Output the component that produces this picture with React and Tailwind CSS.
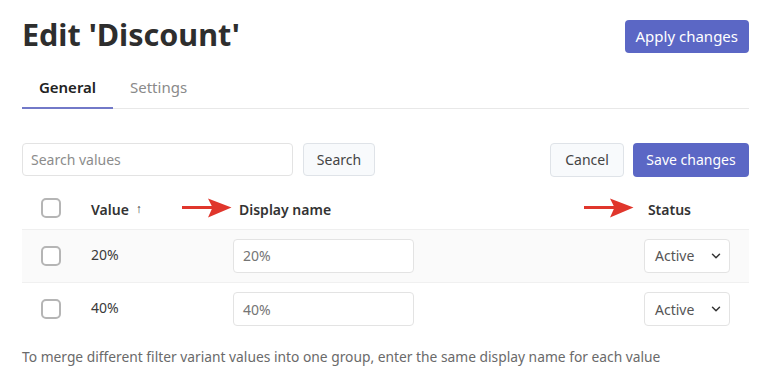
import { ChevronDown } from "lucide-react";

const font = { fontFamily: '"Noto Sans", "Open Sans", sans-serif' };

function RedArrow() {
  return (
    <svg width="50" height="20" viewBox="0 0 50 20" className="shrink-0">
      <path d="M0 9.5 H30" stroke="#e0362c" strokeWidth="3" strokeLinecap="round" />
      <path d="M26 0.5 L49.5 9.5 L26 19.5 L30.5 9.5 Z" fill="#e0362c" />
    </svg>
  );
}

function Checkbox() {
  return <div className="w-[20px] h-[20px] rounded-[5px] border-2 border-[#b5b5b5] bg-white" />;
}

function Row({ value, shaded, last }) {
  return (
    <div className={`flex items-center h-[53px] ${last ? "" : "border-b border-[#f0f0f0]"} ${shaded ? "bg-[#fafafa]" : "bg-white"}`}>
      <div className="w-[69px] pl-[19px]">
        <Checkbox />
      </div>
      <div className="w-[142px] text-[14px] text-[#3a3a3a] -mt-[3px]">{value}</div>
      <div className="w-[181px] h-[34px] border border-[#e3e3e3] rounded-[4px] bg-white flex items-center px-[9px] text-[14px] text-[#757575]">
        {value}
      </div>
      <div className="flex-1" />
      <div className="w-[86px] h-[34px] mr-[19px] border border-[#e3e3e3] rounded-[4px] bg-white flex items-center justify-between pl-[10px] pr-[6px] text-[14px] text-[#555]">
        <span>Active</span>
        <ChevronDown size={14} strokeWidth={2.5} className="text-[#333]" />
      </div>
    </div>
  );
}

export default function App() {
  return (
    <div className="w-[768px] h-[379px] bg-white overflow-hidden px-[22px] pt-[17px]" style={font}>
      <div className="flex items-start justify-between w-[727px]">
        <h1 className="text-[30.5px] leading-[34px] font-bold text-[#2e2e2e]">Edit 'Discount'</h1>
        <button className="mt-[3px] h-[33px] px-[11px] rounded-[4px] bg-[#5b67c5] text-white text-[15px]">
          Apply changes
        </button>
      </div>

      <div className="flex mt-[23px] border-b border-[#e8e8e8] w-[727px]">
        <div className="w-[91px] text-center pb-[8px] border-b-2 border-[#7279c8] -mb-px text-[15px] font-semibold text-[#222]">
          General
        </div>
        <div className="ml-[17px] pb-[8px] text-[15px] text-[#8a8a8a]">Settings</div>
      </div>

      <div className="flex items-center mt-[34px] w-[727px]">
        <div className="w-[271px] h-[33px] border border-[#e3e3e3] rounded-[4px] flex items-center px-[8px] text-[14px] text-[#8c8c8c]">
          Search values
        </div>
        <button className="ml-[10px] w-[72px] h-[33px] border border-[#dfe3e8] bg-[#f8fafc] rounded-[4px] text-[14px] text-[#444]">
          Search
        </button>
        <div className="flex-1" />
        <button className="w-[74px] h-[34px] border border-[#dfe3e8] bg-[#f8fafc] rounded-[4px] text-[14px] text-[#444]">
          Cancel
        </button>
        <button className="ml-[9px] w-[116px] h-[34px] rounded-[4px] bg-[#5b67c5] text-white text-[14px]">
          Save changes
        </button>
      </div>

      <div className="mt-[10px] w-[727px]">
        <div className="flex items-center h-[43px] border-b border-[#efefef]">
          <div className="w-[69px] pl-[19px]">
            <Checkbox />
          </div>
          <div className="w-[91px] mt-[3px] text-[14px] font-semibold text-[#333] flex items-center">
            Value <span className="ml-[7px] text-[12px] font-normal">↑</span>
          </div>
          <RedArrow />
          <div className="ml-[7px] mt-[3px] text-[14px] font-semibold text-[#333]">Display name</div>
          <div className="flex-1" />
          <RedArrow />
          <div className="ml-[14px] mr-[58px] mt-[3px] text-[14px] font-semibold text-[#333]">Status</div>
        </div>
        <Row value="20%" shaded />
        <Row value="40%" last />
      </div>

      <p className="mt-[11px] text-[13.8px] text-[#6a6a6a]">
        To merge different filter variant values into one group, enter the same display name for each value
      </p>
    </div>
  );
}
